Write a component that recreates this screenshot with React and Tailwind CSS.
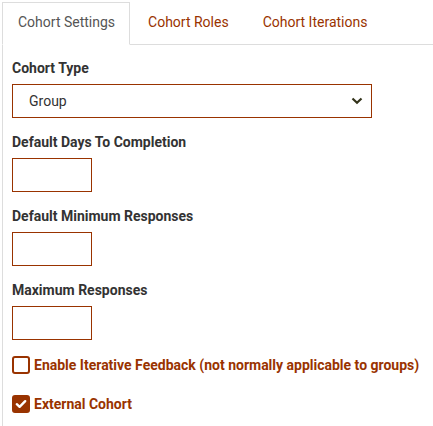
import React from "react";

function Field({ label, children }) {
  return (
    <div className="mb-[14px]">
      <div className="text-[14px] leading-[20px] font-bold text-[#333333] mb-[6px]">{label}</div>
      {children}
    </div>
  );
}

function Box({ checked }) {
  return (
    <span
      className={
        "inline-flex items-center justify-center w-[18px] h-[18px] rounded-[3px] border-2 border-[#993300] " +
        (checked ? "bg-[#993300]" : "bg-white")
      }
    >
      {checked && (
        <svg width="12" height="10" viewBox="0 0 12 10">
          <path d="M1.8 5.2 L4.6 7.8 L10.2 2.2" fill="none" stroke="white" strokeWidth="2.4" strokeLinecap="round" strokeLinejoin="round" />
        </svg>
      )}
    </span>
  );
}

export default function App() {
  return (
    <div className="w-[433px] h-[426px] bg-white pt-[2px] pl-[2px]" style={{ fontFamily: "Roboto, 'Liberation Sans', sans-serif" }}>
      <div className="flex border-b border-[#dddddd]">
        <div className="pl-[15px] pr-[14px] pt-[9px] pb-[11px] leading-[20px] text-[14px] text-[#555555] bg-white border border-[#dddddd] border-b-transparent -mb-px mr-[2px]">
          Cohort Settings
        </div>
        <div className="px-[15px] pt-[9px] pb-[11px] leading-[20px] text-[14px] text-[#993300] border border-transparent mr-[2px]">
          Cohort Roles
        </div>
        <div className="px-[15px] pt-[9px] pb-[11px] leading-[20px] text-[14px] text-[#993300] border border-transparent">
          Cohort Iterations
        </div>
      </div>
      <div className="border-l border-[#dddddd] pl-[9px] pt-[13px] h-[381px]">
        <Field label="Cohort Type">
          <div className="w-[360px] h-[34px] border border-[#993300] flex items-center justify-between pl-[16px] pr-[8px] text-[14px] text-[#333333]">
            <span>Group</span>
            <svg width="12" height="8" viewBox="0 0 12 8">
              <path d="M1.5 1.5 L6 5.8 L10.5 1.5" fill="none" stroke="#33331a" strokeWidth="2.2" />
            </svg>
          </div>
        </Field>
        <Field label="Default Days To Completion">
          <div className="w-[80px] h-[34px] border border-[#993300]" />
        </Field>
        <Field label="Default Minimum Responses">
          <div className="w-[80px] h-[34px] border border-[#993300]" />
        </Field>
        <Field label="Maximum Responses">
          <div className="w-[80px] h-[34px] border border-[#993300]" />
        </Field>
        <div className="flex flex-col gap-[21px] pt-[2px]">
          <div className="flex items-center h-[18px] gap-[4px]">
            <Box checked={false} />
            <span className="text-[14px] font-bold text-[#993300] leading-[20px]">
              Enable Iterative Feedback (not normally applicable to groups)
            </span>
          </div>
          <div className="flex items-center h-[18px] gap-[4px]">
            <Box checked={true} />
            <span className="text-[14px] font-bold text-[#993300] leading-[20px]">External Cohort</span>
          </div>
        </div>
      </div>
    </div>
  );
}
